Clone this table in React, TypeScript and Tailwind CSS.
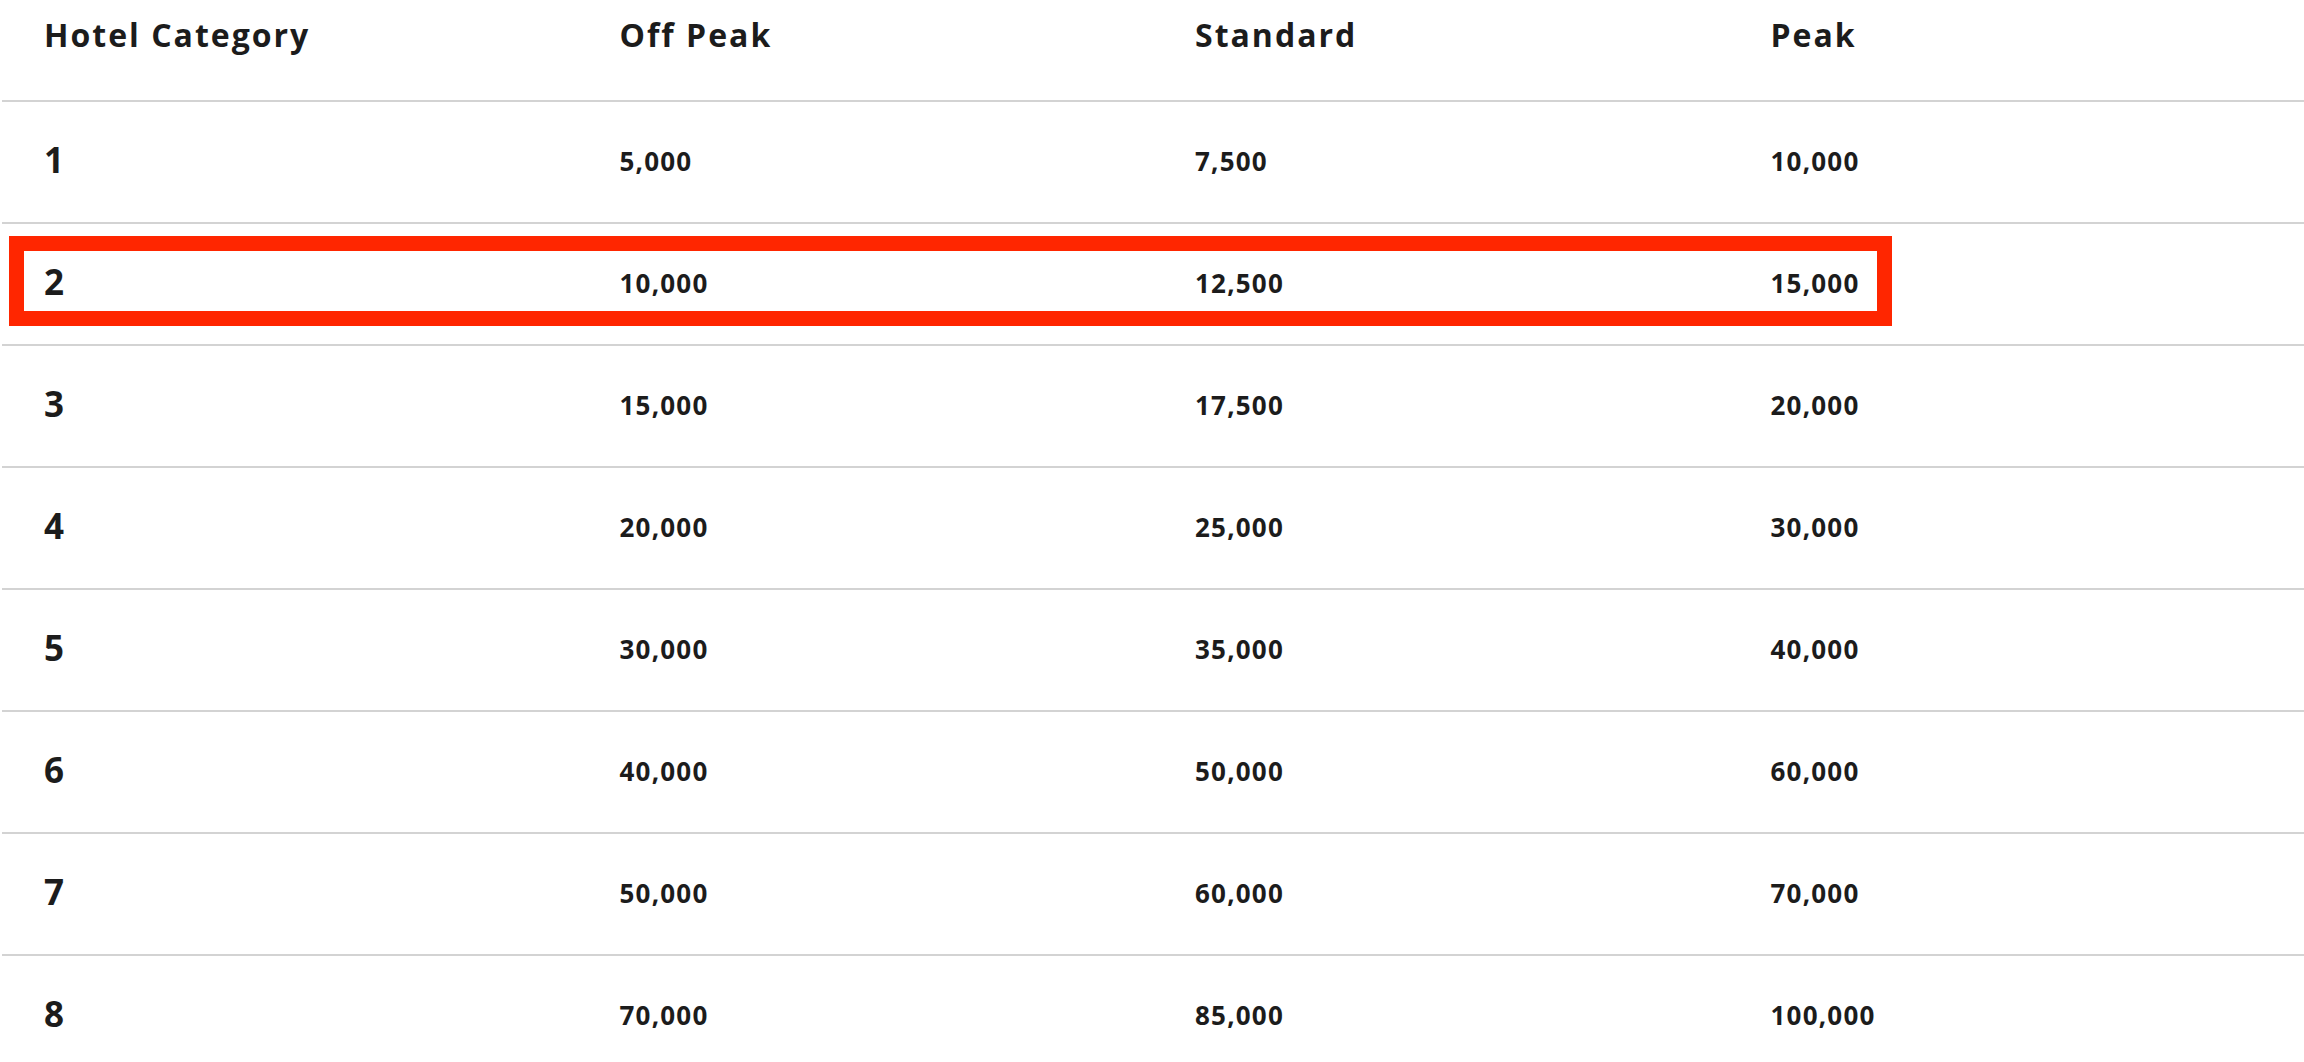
const rows = [
  ["1", "5,000", "7,500", "10,000"],
  ["2", "10,000", "12,500", "15,000"],
  ["3", "15,000", "17,500", "20,000"],
  ["4", "20,000", "25,000", "30,000"],
  ["5", "30,000", "35,000", "40,000"],
  ["6", "40,000", "50,000", "60,000"],
  ["7", "50,000", "60,000", "70,000"],
  ["8", "70,000", "85,000", "100,000"],
];

const headers = ["Hotel Category", "Off Peak", "Standard", "Peak"];

export default function App() {
  return (
    <main
      className="min-h-screen w-full overflow-hidden bg-white pl-[2px] text-[#1c1c1c]"
      style={{ fontFamily: "'Open Sans', Lato, sans-serif" }}
    >
      <div className="grid h-[102px] grid-cols-4 border-b-2 border-[#d3d3d3]">
        {headers.map((h) => (
          <div
            key={h}
            className="pl-[42px] pt-[15px] text-[32px] font-bold leading-[40px] tracking-[2px]"
          >
            {h}
          </div>
        ))}
      </div>

      {rows.map((r, i) => (
        <div key={r[0]} className="relative grid h-[122px] grid-cols-4 items-center border-b-2 border-[#d3d3d3]">
          {r.map((cell, j) => (
            <div
              key={j}
              className={
                j === 0
                  ? "pb-[4px] pl-[42px] text-[35px] font-bold"
                  : "pb-[2px] pl-[42px] text-[26px] font-bold tracking-[1.2px]"
              }
            >
              {cell}
            </div>
          ))}
          {/* highlighted row */}
          {i === 1 && (
            <div className="pointer-events-none absolute left-[7px] top-[12px] h-[90px] w-[1883px] border-[15px] border-[#ff2600]" />
          )}
        </div>
      ))}
    </main>
  );
}
